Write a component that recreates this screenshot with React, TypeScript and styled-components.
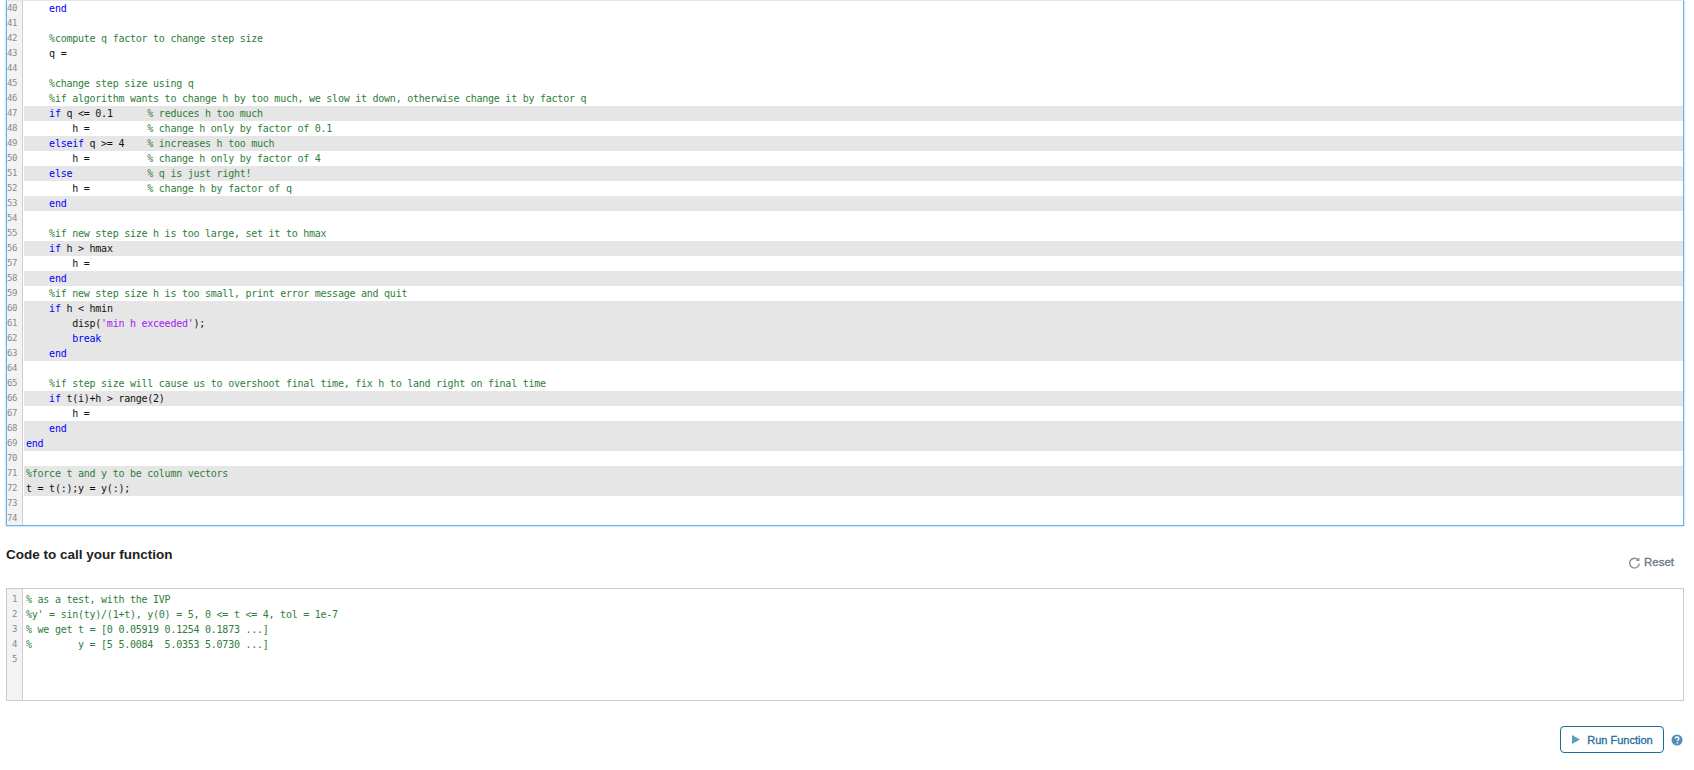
import { Fragment } from "react";
import styled, { createGlobalStyle } from "styled-components";

const GlobalStyle = createGlobalStyle`
  html, body {
    margin: 0;
    padding: 0;
    background: #fff;
  }
`;

const Page = styled.div`
  width: 1694px;
  height: 770px;
  overflow: hidden;
  padding: 0 10px 0 6px;
  box-sizing: border-box;
  font-family: "Liberation Sans", Arial, sans-serif;
`;

const Editor = styled.div<{ $focused?: boolean; $height: number }>`
  height: ${(p) => p.$height}px;
  box-sizing: border-box;
  overflow: hidden;
  display: flex;
  flex-direction: column;
  padding-top: ${(p) => (p.$focused ? 0 : 3)}px;
  border: 1px solid ${(p) => (p.$focused ? "#69b3ec" : "#cccccc")};
  border-top-color: ${(p) => (p.$focused ? "#e4e4e4" : "#cccccc")};
  box-shadow: ${(p) => (p.$focused ? "0 0 2px rgba(105, 179, 236, 0.8)" : "none")};
  background: linear-gradient(
    to right,
    #f3f3f3 0,
    #f3f3f3 15px,
    #cfcfcf 15px,
    #cfcfcf 16px,
    #ffffff 16px
  );
`;

const Line = styled.div<{ $marked?: boolean }>`
  display: flex;
  height: 15px;
  flex: none;
  background: ${(p) => (p.$marked ? "#e6e6e6" : "transparent")};
  background-clip: content-box;
  padding-left: 17px;
  position: relative;
`;

const LineNo = styled.span`
  position: absolute;
  left: 0;
  width: 10px;
  text-align: right;
  font: 9px/15px "DejaVu Sans Mono", monospace;
  letter-spacing: -0.4px;
  color: #8a8a8a;
`;

const Code = styled.code`
  padding-left: 2px;
  font: 10px/15px "DejaVu Sans Mono", monospace;
  letter-spacing: -0.245px;
  white-space: pre;
  color: #111111;
`;

const Comment = styled.span`
  color: #2e7d3a;
`;
const Keyword = styled.span`
  color: #0000ff;
`;
const Str = styled.span`
  color: #a020f0;
`;

const Toolbar = styled.div`
  display: flex;
  align-items: center;
  justify-content: space-between;
  height: 62px;
`;

const Heading = styled.h3`
  margin: 0 0 5px;
  font-size: 13.5px;
  font-weight: 700;
  color: #222222;
`;

const ResetButton = styled.button`
  display: flex;
  align-items: center;
  gap: 3px;
  border: none;
  background: none;
  padding: 0;
  margin: 10px 10px 0 0;
  font: 400 11.5px "Liberation Sans", Arial, sans-serif;
  -webkit-text-stroke: 0.3px #6a7480;
  color: #6a7480;
`;

const Actions = styled.div`
  display: flex;
  align-items: center;
  justify-content: flex-end;
  gap: 7px;
  margin-top: 25px;
  padding-right: 1px;
`;

const RunButton = styled.button`
  display: flex;
  align-items: center;
  justify-content: center;
  gap: 6px;
  width: 104px;
  height: 27px;
  padding: 0;
  box-sizing: border-box;
  background: #fff;
  border: 1px solid #1b6d9c;
  border-radius: 4px;
  font: 400 11px "Liberation Sans", Arial, sans-serif;
  -webkit-text-stroke: 0.3px #1b6d9c;
  color: #1b6d9c;
`;

const mainCode: string[] = [
  "    end",
  "",
  "    %compute q factor to change step size",
  "    q = ",
  "",
  "    %change step size using q",
  "    %if algorithm wants to change h by too much, we slow it down, otherwise change it by factor q",
  "    if q <= 0.1      % reduces h too much",
  "        h =          % change h only by factor of 0.1",
  "    elseif q >= 4    % increases h too much",
  "        h =          % change h only by factor of 4",
  "    else             % q is just right!",
  "        h =          % change h by factor of q",
  "    end",
  "",
  "    %if new step size h is too large, set it to hmax",
  "    if h > hmax",
  "        h = ",
  "    end",
  "    %if new step size h is too small, print error message and quit",
  "    if h < hmin",
  "        disp('min h exceeded');",
  "        break",
  "    end",
  "",
  "    %if step size will cause us to overshoot final time, fix h to land right on final time",
  "    if t(i)+h > range(2)",
  "        h = ",
  "    end",
  "end",
  "",
  "%force t and y to be column vectors",
  "t = t(:);y = y(:);",
  "",
  "",
];

const marked = [47, 49, 51, 53, 56, 58, 60, 61, 62, 63, 66, 68, 69, 71, 72];

const callCode: string[] = [
  "% as a test, with the IVP",
  "%y' = sin(ty)/(1+t), y(0) = 5, 0 <= t <= 4, tol = 1e-7",
  "% we get t = [0 0.05919 0.1254 0.1873 ...]",
  "%        y = [5 5.0084  5.0353 5.0730 ...]",
  "",
];

// tiny matlab highlighter, just enough for the lines above
function highlight(text: string) {
  const at = text.indexOf("%");
  const code = at >= 0 ? text.slice(0, at) : text;
  const comment = at >= 0 ? text.slice(at) : "";
  const parts = code.split(/(\b(?:if|elseif|else|end|break)\b|'[^']*')/);
  return (
    <>
      {parts.map((part, i) => {
        if (i % 2 === 0) return <Fragment key={i}>{part}</Fragment>;
        if (part.startsWith("'")) return <Str key={i}>{part}</Str>;
        return <Keyword key={i}>{part}</Keyword>;
      })}
      {comment && <Comment>{comment}</Comment>}
    </>
  );
}

function CodeLines({ lines, first, hl = [] }: { lines: string[]; first: number; hl?: number[] }) {
  return (
    <>
      {lines.map((text, i) => (
        <Line key={i} $marked={hl.includes(first + i)}>
          <LineNo>{first + i}</LineNo>
          <Code>{highlight(text)}</Code>
        </Line>
      ))}
    </>
  );
}

export default function App() {
  return (
    <Page>
      <GlobalStyle />
      <Editor $focused $height={526}>
        <CodeLines lines={mainCode} first={40} hl={marked} />
      </Editor>
      <Toolbar>
        <Heading>Code to call your function</Heading>
        <ResetButton>
          <svg width="13" height="13" viewBox="0 0 24 24" fill="none" stroke="#8a8f94" strokeWidth="2.6">
            <path d="M19.5 8A9 9 0 1 0 21 14" />
            <path d="M21 2.5V9h-6.5" fill="#8a8f94" stroke="none" />
          </svg>
          Reset
        </ResetButton>
      </Toolbar>
      <Editor $height={113}>
        <CodeLines lines={callCode} first={1} />
      </Editor>
      <Actions>
        <RunButton>
          <svg width="10" height="11" viewBox="0 0 10 11">
            <path d="M1 1l8 4.5L1 10z" fill="#5b9bc4" />
          </svg>
          Run Function
        </RunButton>
        <svg width="12" height="12" viewBox="0 0 12 12">
          <circle cx="6" cy="6" r="5.5" fill="#4f8fb8" />
          <path d="M4.2 4.6C4.3 3.5 5 3 6 3s1.9.6 1.9 1.6c0 1.3-1.5 1.3-1.5 2.4" fill="none" stroke="#fff" strokeWidth="1.3" />
          <circle cx="6.3" cy="8.9" r=".8" fill="#fff" />
        </svg>
      </Actions>
    </Page>
  );
}
